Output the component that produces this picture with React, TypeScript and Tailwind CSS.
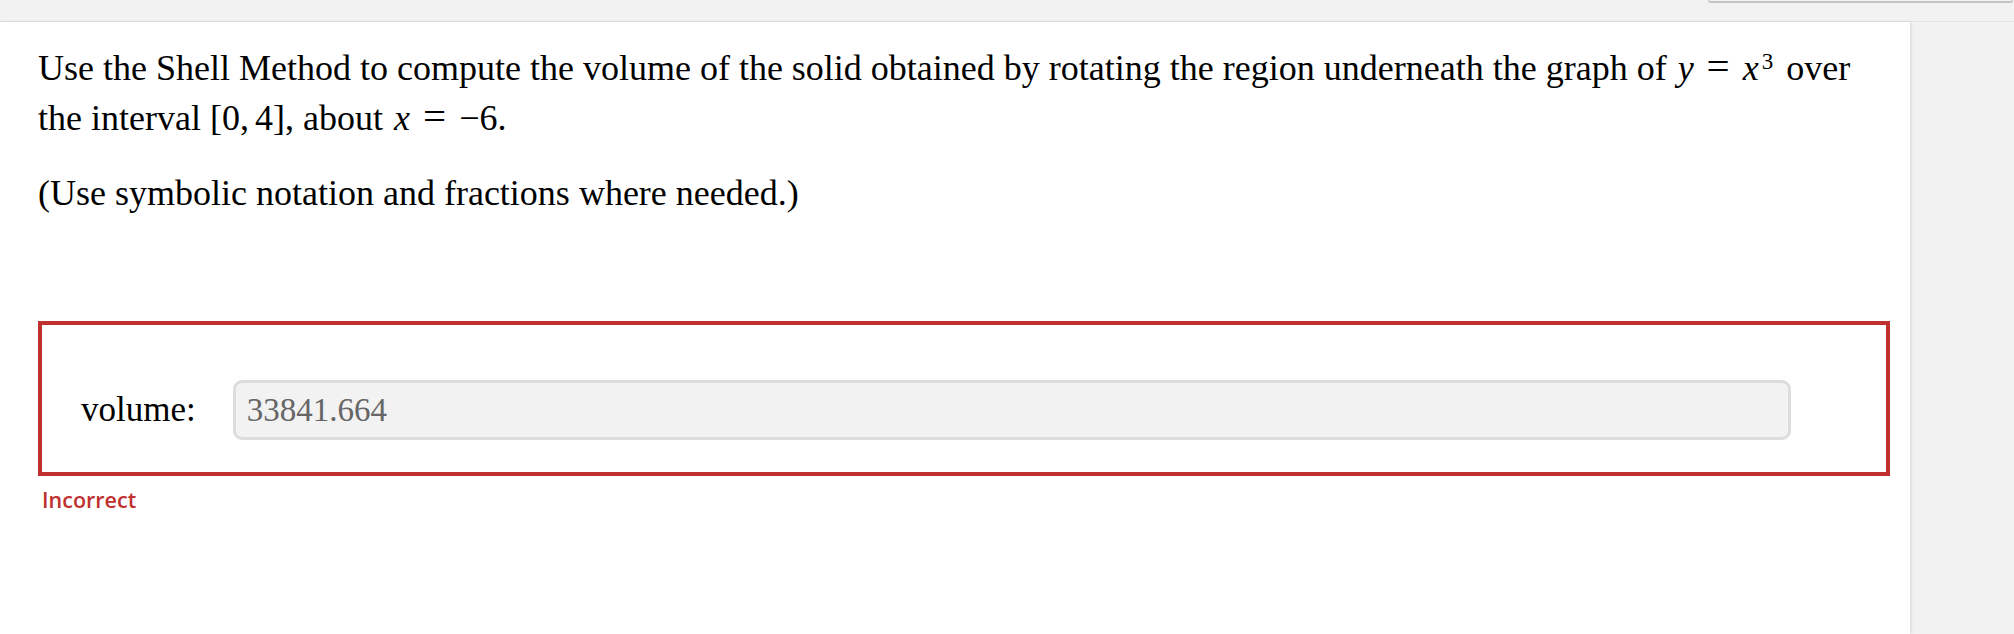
import React from "react";

const I = ({ children, className = "" }: { children: React.ReactNode; className?: string }) => (
  <span className={"italic " + className}>{children}</span>
);

export default function App() {
  return (
    <div className="min-h-[634px] bg-[#f2f2f2] font-['Liberation_Serif','Times_New_Roman',serif] overflow-hidden">
      <div className="h-[22px] flex justify-end border-b border-[#e4e4e4]">
        <div className="mr-[1px] w-[305px] h-[3px] border-b-2 border-x border-[#c4c4c4] rounded-b-[5px]" />
      </div>
      <div className="w-[1910px] min-h-[612px] bg-white shadow-[1px_0_3px_rgba(0,0,0,0.12)] pt-[21px] pl-[38px] pr-[30px]">
        <p className="text-[36px] leading-[50px] text-black">
          Use the Shell Method to compute the volume of the solid obtained by rotating the region underneath the graph of{" "}
          <I className="ml-[2px]">y</I>
          <span className="mx-[13px] text-[41px] leading-none">=</span>
          <I>x</I>
          <span className="text-[23px] leading-none align-[11px] ml-[3px] mr-[4px]">3</span> over the interval [0,<span className="ml-[0.17em]">4]</span>, about{" "}
          <I className="ml-[2px]">x</I>
          <span className="mx-[13px] text-[41px] leading-none">=</span>−6.
        </p>
        <p className="mt-[25px] text-[36px] leading-[50px] text-black">
          (Use symbolic notation and fractions where needed.)
        </p>
        <div className="mt-[103px] w-[1852px] border-4 border-[#c0302f] pt-[55px] pb-[32px] pl-[39px] flex items-center">
          <span className="text-[35px] leading-[60px] text-black mr-[37px]">volume:</span>
          <div className="w-[1558px] h-[60px] border-[3px] border-[#dddddd] rounded-[9px] bg-[#f2f2f2] pl-[11px] flex items-center">
            <span className="text-[33px] text-[#666666] leading-none">33841.664</span>
          </div>
        </div>
        <div className="mt-[8px] ml-[4px] font-['Open_Sans',sans-serif] font-semibold text-[21.5px] text-[#c0302f]">
          Incorrect
        </div>
      </div>
    </div>
  );
}
